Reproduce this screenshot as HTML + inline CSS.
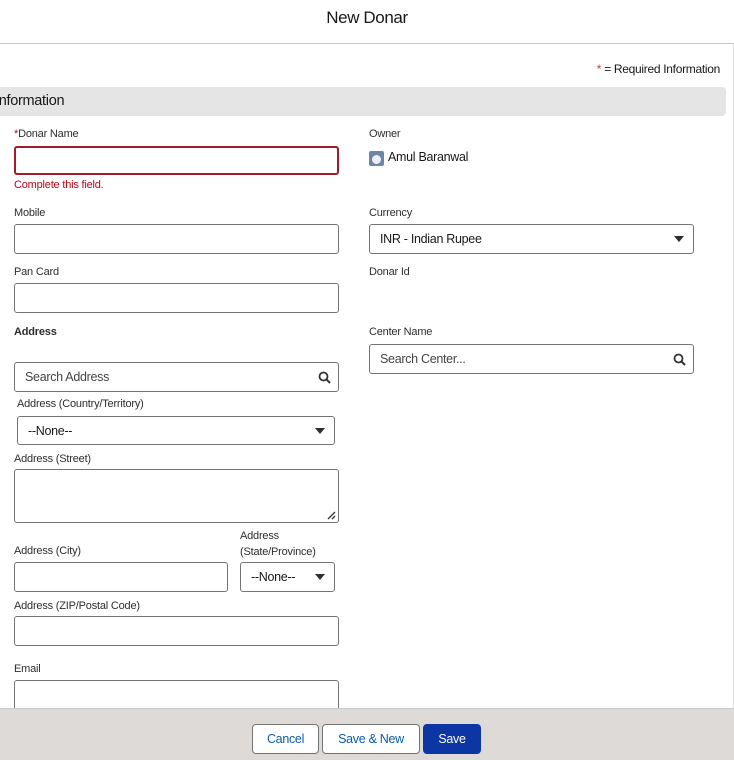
<!DOCTYPE html>
<html><head><style>
*{box-sizing:border-box;margin:0;padding:0}
body{width:734px;height:760px;overflow:hidden;background:#fff;font-family:"Liberation Sans",sans-serif;color:#181818;position:relative;font-size:11px}
.a{position:absolute}
.in{position:absolute;border:1px solid #747474;border-radius:3px;background:#fff;height:30px}
.lb{position:absolute;font-size:11px;color:#2e2e2e;letter-spacing:-0.2px}
.sel{font-size:12.5px;color:#181818;padding:7px 10px;letter-spacing:-0.3px}
.tri{position:absolute;right:9px;top:11px;width:0;height:0;border-left:5px solid transparent;border-right:5px solid transparent;border-top:6px solid #2e2e2e}
.mag{position:absolute;right:7px;top:8px;width:13px;height:13px}
.btn{position:absolute;top:724px;height:30px;border:1px solid #747474;border-radius:4px;background:#fff;color:#0b5cab;font-size:12.5px;text-align:center;line-height:28px;letter-spacing:-0.3px}
</style></head><body>
<div class="a" style="left:0;top:0;width:734px;height:44px;border-bottom:1px solid #c9c9c9;text-align:center;line-height:36px;font-size:17px;letter-spacing:-0.4px">New Donar</div>
<div class="a" style="right:0;top:44px;width:1px;height:664px;background:#ddd"></div>
<div class="a" style="right:14px;top:62px;font-size:12px;letter-spacing:-0.3px"><span style="color:#c23934">*</span> = Required Information</div>
<div class="a" style="left:0;top:87px;width:726px;height:29px;background:#e5e5e5;border-radius:0 4px 4px 0;font-size:14.5px;line-height:29px;padding-left:0;text-indent:-5px;letter-spacing:-0.3px">Information</div>

<div class="lb" style="left:14px;top:128px"><span style="color:#ba0517">*</span>Donar Name</div>
<div class="in" style="left:14px;top:146px;width:325px;height:29px;border:2px solid #a21d2a"></div>
<div class="lb" style="left:14px;top:179px;color:#ba0517">Complete this field.</div>
<div class="lb" style="left:369px;top:128px">Owner</div>
<div class="a" style="left:369px;top:151px;width:15px;height:15px;background:#6c86a8;border-radius:2px"><div style="margin:4px 3px;width:9px;height:9px;border-radius:50%;background:#eef"></div></div>
<div class="a" style="left:388px;top:150px;font-size:12.5px;letter-spacing:-0.3px">Amul Baranwal</div>

<div class="lb" style="left:14px;top:207px">Mobile</div>
<div class="in" style="left:14px;top:224px;width:325px"></div>
<div class="lb" style="left:369px;top:207px">Currency</div>
<div class="in sel" style="left:369px;top:224px;width:325px">INR - Indian Rupee<div class="tri"></div></div>

<div class="lb" style="left:14px;top:266px">Pan Card</div>
<div class="in" style="left:14px;top:283px;width:325px"></div>
<div class="lb" style="left:369px;top:266px">Donar Id</div>

<div class="lb" style="left:14px;top:326px;font-weight:bold">Address</div>
<div class="lb" style="left:369px;top:326px">Center Name</div>
<div class="in sel" style="left:369px;top:344px;width:325px;color:#444">Search Center...<svg class="mag" viewBox="0 0 13 13"><circle cx="5.5" cy="5.5" r="4" fill="none" stroke="#333" stroke-width="1.8"/><path d="M8.5 8.5L12 12" stroke="#333" stroke-width="2"/></svg></div>

<div class="in sel" style="left:14px;top:362px;width:325px;color:#444">Search Address<svg class="mag" viewBox="0 0 13 13"><circle cx="5.5" cy="5.5" r="4" fill="none" stroke="#333" stroke-width="1.8"/><path d="M8.5 8.5L12 12" stroke="#333" stroke-width="2"/></svg></div>
<div class="lb" style="left:17px;top:398px">Address (Country/Territory)</div>
<div class="in sel" style="left:17px;top:416px;width:318px;height:29px">--None--<div class="tri"></div></div>
<div class="lb" style="left:14px;top:453px">Address (Street)</div>
<div class="in" style="left:14px;top:469px;width:325px;height:54px"><svg class="a" style="right:2px;bottom:2px" width="10" height="10"><path d="M2 9L9 2M6 9L9 6" stroke="#333" stroke-width="1.3"/></svg></div>
<div class="lb" style="left:240px;top:528px;line-height:16px">Address<br>(State/Province)</div>
<div class="lb" style="left:14px;top:545px">Address (City)</div>
<div class="in" style="left:14px;top:562px;width:214px"></div>
<div class="in sel" style="left:240px;top:562px;width:95px">--None--<div class="tri"></div></div>
<div class="lb" style="left:14px;top:600px">Address (ZIP/Postal Code)</div>
<div class="in" style="left:14px;top:616px;width:325px"></div>
<div class="lb" style="left:14px;top:663px">Email</div>
<div class="in" style="left:14px;top:680px;width:325px"></div>

<div class="a" style="left:0;top:708px;width:734px;height:52px;background:#dedad7;border-top:1px solid #c9c9c9"></div>
<div class="btn" style="left:252px;width:67px">Cancel</div>
<div class="btn" style="left:322px;width:98px">Save &amp; New</div>
<div class="btn" style="left:423px;width:58px;background:#0b36a3;border-color:#0b36a3;color:#fff">Save</div>
</body></html>
